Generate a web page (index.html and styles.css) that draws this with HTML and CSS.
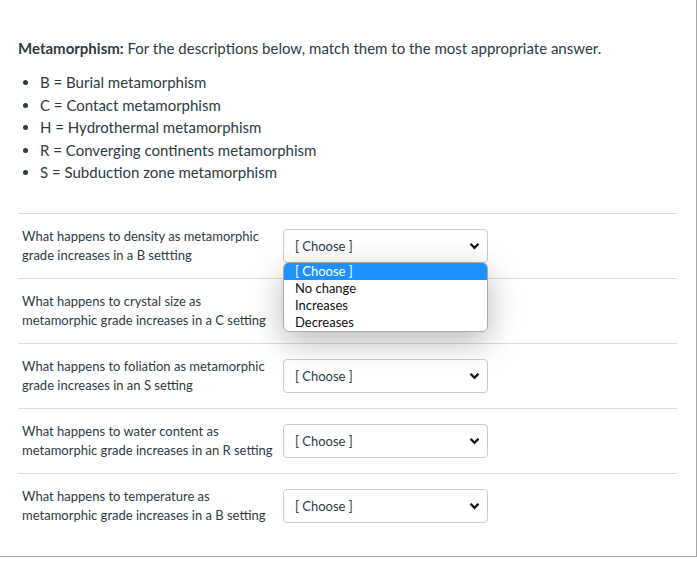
FILE: index.html
```html
<!DOCTYPE html>
<html lang="en">
<head>
    <meta charset="UTF-8">
    <title>Metamorphism - Matching</title>
    <link rel="stylesheet" href="styles.css">
</head>
<body>
    <div class="quiz">
        <p class="quiz-intro"><strong>Metamorphism:</strong> For the descriptions below, match them to the most appropriate answer.</p>
        <ul class="key-list">
            <li>B = Burial metamorphism</li>
            <li>C = Contact metamorphism</li>
            <li>H = Hydrothermal metamorphism</li>
            <li>R = Converging continents metamorphism</li>
            <li>S = Subduction zone metamorphism</li>
        </ul>

        <div class="match-rows">
            <div class="match-row">
                <div class="match-label">What happens to density as metamorphic grade increases in a B settting</div>
                <div class="match-select">
                    <div class="select-box">
                        <span>[ Choose ]</span>
                        <svg class="chevron" width="11" height="8" viewBox="0 0 11 8"><polyline points="1.5,1.8 5.5,5.8 9.5,1.8" fill="none" stroke="#111" stroke-width="2.3"/></svg>
                    </div>
                    <ul class="select-menu">
                        <li class="active">[ Choose ]</li>
                        <li>No change</li>
                        <li>Increases</li>
                        <li>Decreases</li>
                    </ul>
                </div>
            </div>
            <div class="match-row">
                <div class="match-label">What happens to crystal size as metamorphic grade increases in a C setting</div>
                <div class="match-select">
                    <!-- covered by the open list above -->
                    <div class="select-box is-covered"></div>
                </div>
            </div>
            <div class="match-row">
                <div class="match-label">What happens to foliation as metamorphic grade increases in an S setting</div>
                <div class="match-select">
                    <div class="select-box">
                        <span>[ Choose ]</span>
                        <svg class="chevron" width="11" height="8" viewBox="0 0 11 8"><polyline points="1.5,1.8 5.5,5.8 9.5,1.8" fill="none" stroke="#111" stroke-width="2.3"/></svg>
                    </div>
                </div>
            </div>
            <div class="match-row">
                <div class="match-label">What happens to water content as metamorphic grade increases in an R setting</div>
                <div class="match-select">
                    <div class="select-box">
                        <span>[ Choose ]</span>
                        <svg class="chevron" width="11" height="8" viewBox="0 0 11 8"><polyline points="1.5,1.8 5.5,5.8 9.5,1.8" fill="none" stroke="#111" stroke-width="2.3"/></svg>
                    </div>
                </div>
            </div>
            <div class="match-row">
                <div class="match-label">What happens to temperature as metamorphic grade increases in a B setting</div>
                <div class="match-select">
                    <div class="select-box">
                        <span>[ Choose ]</span>
                        <svg class="chevron" width="11" height="8" viewBox="0 0 11 8"><polyline points="1.5,1.8 5.5,5.8 9.5,1.8" fill="none" stroke="#111" stroke-width="2.3"/></svg>
                    </div>
                </div>
            </div>
        </div>
    </div>
</body>
</html>
```

FILE: styles.css
```css
* {
    margin: 0;
    padding: 0;
    box-sizing: border-box;
}

body {
    font-family: Lato, "Open Sans", sans-serif;
    color: #2d3b45;
    background: white;
}

/* Question card - only right and bottom edges are visible */
.quiz {
    width: 697px;
    height: 557px;
    padding: 37px 19px 0 18px;
    border-right: 1px solid #a5a5a5;
    border-bottom: 1px solid #a5a5a5;
}

.quiz-intro {
    font-size: 15px;
    line-height: 22px;
}

.quiz-intro strong {
    font-weight: 700;
}

.key-list {
    margin-top: 12px;
    padding-left: 22px;
    font-size: 15px;
    line-height: 22.5px;
}

.match-rows {
    margin-top: 29px;
}

.match-row {
    display: flex;
    align-items: center;
    padding: 13px 0 13px 4px;
    border-top: 1px solid #dcdcdc;
}

.match-label {
    width: 254px;
    margin-right: 7px;
    font-size: 13px;
    line-height: 19px;
}

.match-select {
    position: relative;
}

.select-box {
    width: 205px;
    height: 34px;
    display: flex;
    align-items: center;
    justify-content: space-between;
    padding: 0 7px 0 11px;
    border: 1px solid #c7cdd1;
    border-radius: 4px;
    background: white;
    font-size: 13px;
}

.chevron {
    display: block;
}

/* Open dropdown list of the first select */
.select-menu {
    position: absolute;
    top: 33px;
    left: 0;
    width: 205px;
    list-style: none;
    background: white;
    border: 1px solid #a9a9a9;
    border-radius: 6px;
    overflow: hidden;
    box-shadow: 0 10px 32px rgba(0, 0, 0, 0.28);
    font-size: 13px;
    line-height: 17px;
    z-index: 10;
}

.select-menu li {
    padding-left: 11px;
    color: #111;
}

.select-menu li.active {
    background: #1e90ff;
    color: white;
}
```
